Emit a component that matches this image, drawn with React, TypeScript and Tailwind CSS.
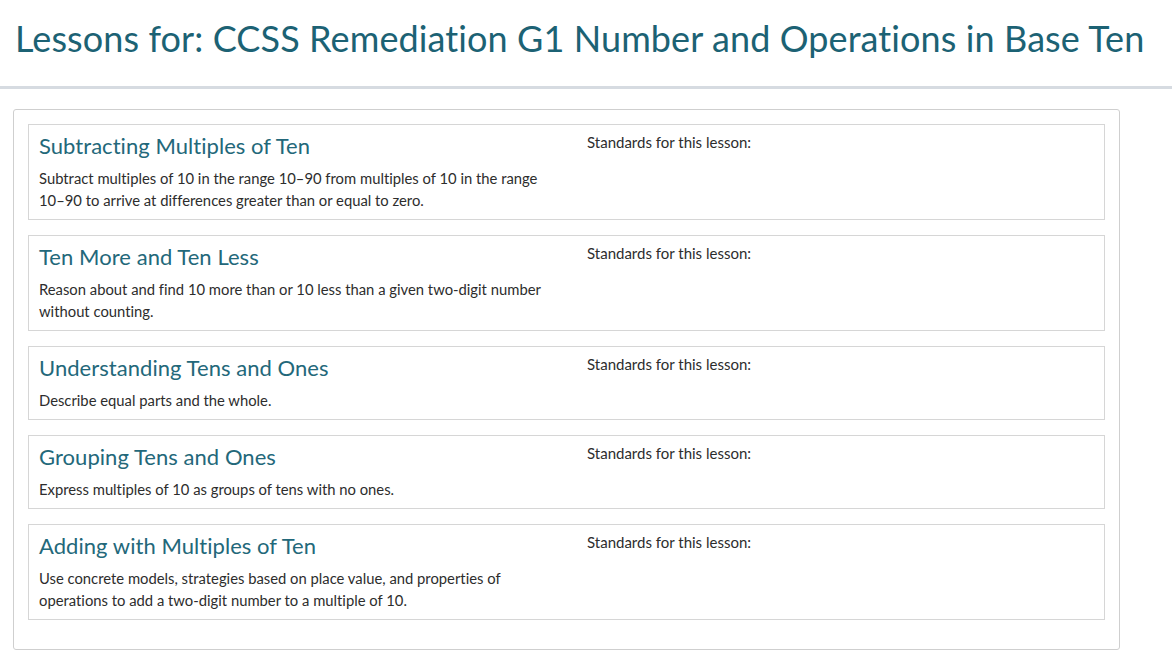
const lessons = [
  {
    title: "Subtracting Multiples of Ten",
    description:
      "Subtract multiples of 10 in the range 10–90 from multiples of 10 in the range 10–90 to arrive at differences greater than or equal to zero.",
  },
  {
    title: "Ten More and Ten Less",
    description:
      "Reason about and find 10 more than or 10 less than a given two-digit number without counting.",
  },
  {
    title: "Understanding Tens and Ones",
    description: "Describe equal parts and the whole.",
  },
  {
    title: "Grouping Tens and Ones",
    description: "Express multiples of 10 as groups of tens with no ones.",
  },
  {
    title: "Adding with Multiples of Ten",
    description:
      "Use concrete models, strategies based on place value, and properties of operations to add a two-digit number to a multiple of 10.",
  },
];

function LessonCard({ title, description }: { title: string; description: string }) {
  return (
    <div className="mb-[15px] flex border border-[#d6d6d6] bg-white px-[10px] pb-[8px] pt-[9px]">
      <div className="w-[548px] shrink-0 pr-[26px]">
        <h3 className="mb-[9px] text-[22px] leading-[24px] tracking-[0.05px] text-[#23687a]">{title}</h3>
        <p className="text-[14.8px] leading-[22px] text-[#2d2d2d]">{description}</p>
      </div>
      <div className="flex-1">
        <p className="text-[15px] leading-[16px] text-[#2d2d2d]">Standards for this lesson:</p>
      </div>
    </div>
  );
}

export default function App() {
  return (
    <div className="min-h-[664px] bg-white font-['Lato','Liberation_Sans',sans-serif] [font-variant-ligatures:none]">
      <header className="h-[89px] border-b-[3px] border-[#d6dbe1] bg-white px-[15px] pt-[18px]">
        <h1 className="whitespace-nowrap text-[36px] leading-[40px] tracking-[0.1px] text-[#1c6274]">
          Lessons for: CCSS Remediation G1 Number and Operations in Base Ten
        </h1>
      </header>

      <main className="ml-[13px] mt-[20px] w-[1107px] rounded-[3px] border border-[#cfcfcf] px-[14px] pb-[14px] pt-[14px]">
        {lessons.map((lesson) => (
          <LessonCard key={lesson.title} title={lesson.title} description={lesson.description} />
        ))}
      </main>
    </div>
  );
}
